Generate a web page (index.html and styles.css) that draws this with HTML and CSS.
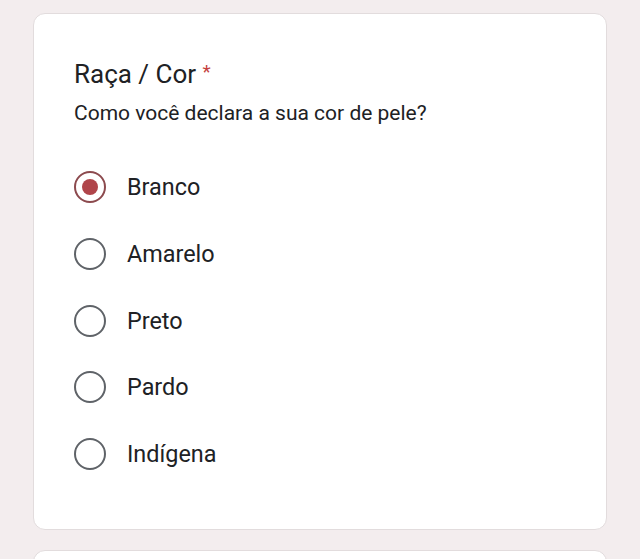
FILE: index.html
```html
<!DOCTYPE html>
<html lang="pt">
<head>
    <meta charset="UTF-8">
    <meta name="viewport" content="width=device-width, initial-scale=1.0">
    <title>Raça / Cor</title>
    <link rel="stylesheet" href="styles.css">
</head>
<body>
    <div class="form-card">
        <div class="question-title">Raça / Cor <span class="required">*</span></div>
        <div class="question-help">Como você declara a sua cor de pele?</div>
        <div class="options">
            <label class="option checked">
                <span class="radio"></span>
                <span class="option-label">Branco</span>
            </label>
            <label class="option">
                <span class="radio"></span>
                <span class="option-label">Amarelo</span>
            </label>
            <label class="option">
                <span class="radio"></span>
                <span class="option-label">Preto</span>
            </label>
            <label class="option">
                <span class="radio"></span>
                <span class="option-label">Pardo</span>
            </label>
            <label class="option">
                <span class="radio"></span>
                <span class="option-label">Indígena</span>
            </label>
        </div>
    </div>
    <div class="form-card next"></div>
</body>
</html>
```

FILE: styles.css
```css
:root {
    --page-bg: #f3edee;
    --card-border: #e2dcdd;
    --text-main: #202124;
    --required-red: #c5403e;
    --radio-grey: #5f6368;
    --radio-ring: #8c4a4e;
    --radio-dot: #b0454a;
}

body {
    margin: 0;
    height: 559px;
    overflow: hidden;
    background: var(--page-bg);
    font-family: Roboto, "Noto Sans", sans-serif;
    color: var(--text-main);
    padding-top: 13px;
    box-sizing: border-box;
}

.form-card {
    margin-left: 33px;
    width: 574px;
    box-sizing: border-box;
    background: #fff;
    border: 1px solid var(--card-border);
    border-radius: 12px;
    padding: 42px 40px 42px;
}

.form-card.next {
    margin-top: 20px;
    height: 60px;
    padding: 0;
}

.question-title {
    font-size: 26px;
    line-height: 32px;
}

.required {
    color: var(--required-red);
    font-size: 19px;
    vertical-align: 5px;
}

.question-help {
    margin-top: 11px;
    font-size: 21px;
    line-height: 24px;
}

.options {
    margin-top: 29px;
    display: flex;
    flex-direction: column;
}

.option {
    display: flex;
    align-items: center;
    height: 66.7px;
    gap: 21px;
}

.radio {
    width: 32px;
    height: 32px;
    box-sizing: border-box;
    border: 2.5px solid var(--radio-grey);
    border-radius: 50%;
    display: flex;
    align-items: center;
    justify-content: center;
    flex-shrink: 0;
}

.option.checked .radio {
    border-color: var(--radio-ring);
}

.option.checked .radio::after {
    content: "";
    width: 16px;
    height: 16px;
    border-radius: 50%;
    background: var(--radio-dot);
}

.option-label {
    font-size: 23.4px;
}
```
